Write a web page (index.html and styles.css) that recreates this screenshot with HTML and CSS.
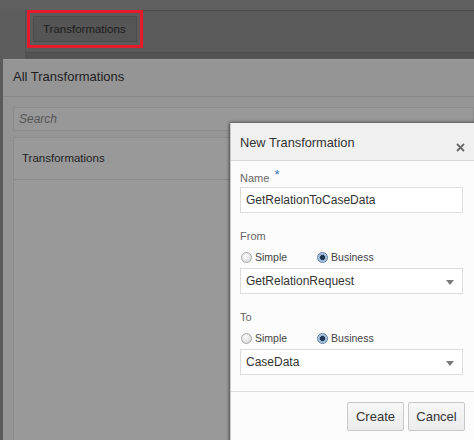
FILE: index.html
```html
<!DOCTYPE html>
<html>
<head>
<meta charset="utf-8">
<link rel="stylesheet" href="styles.css">
</head>
<body>
<div class="topbar">
  <div class="top-left"></div>
  <div class="tabs">
    <div class="tab">Transformations</div>
  </div>
</div>
<div class="panel">
  <div class="panel-head">All Transformations</div>
  <div class="panel-body">
    <div class="search">Search</div>
    <div class="list">
      <div class="list-row">Transformations</div>
    </div>
  </div>
</div>
<div class="dialog">
  <div class="dlg-head">
    <span class="dlg-title">New Transformation</span>
    <svg class="close" width="9" height="9" viewBox="0 0 9 9"><path d="M1 1L8 8M8 1L1 8" stroke="#6a6a6a" stroke-width="1.8"/></svg>
  </div>
  <div class="dlg-body">
    <div class="label">Name <span class="req">*</span></div>
    <div class="field">GetRelationToCaseData</div>
    <div class="label gap-lg">From</div>
    <div class="radios">
      <span class="radio"><span class="dot"></span>Simple</span>
      <span class="radio"><span class="dot on"></span>Business</span>
    </div>
    <div class="field select">GetRelationRequest<span class="arrow"></span></div>
    <div class="label gap-lg">To</div>
    <div class="radios">
      <span class="radio"><span class="dot"></span>Simple</span>
      <span class="radio"><span class="dot on"></span>Business</span>
    </div>
    <div class="field select">CaseData<span class="arrow"></span></div>
  </div>
  <div class="dlg-foot">
    <button class="btn">Create</button>
    <button class="btn">Cancel</button>
  </div>
</div>
</body>
</html>
```

FILE: styles.css
```css
html, body {
  margin: 0;
  padding: 0;
}
body {
  width: 474px;
  height: 440px;
  overflow: hidden;
  background: #5a5a5a;
  font-family: "Liberation Sans", Arial, sans-serif;
  position: relative;
}
.topbar {
  height: 59px;
  display: flex;
  background: #5b5b5b;
  border-top: 10px solid #5f5f5f;
  box-sizing: border-box;
  box-shadow: inset 0 1px 0 #4b4b4b, inset 0 -6px 0 #535353, inset 0 -7px 0 #4e4e4e;
}
.top-left {
  width: 25px;
  border-right: 1px solid #525252;
  background: #5d5d5d;
}
.tabs {
  padding: 6px 0 0 7px;
}
.tab {
  width: 104px;
  height: 26px;
  box-sizing: border-box;
  background: #555555;
  border: 1px solid #4c4c4c;
  color: #1c1c1c;
  font-size: 11.5px;
  line-height: 24px;
  padding-left: 9px;
  outline: 3px solid #e41b2a;
  outline-offset: 3px;
}
.panel {
  margin-left: 3px;
  height: 381px;
  background: #959595;
  border-top: 1px solid #9c9c9c;
  box-sizing: border-box;
}
.panel-head {
  height: 37px;
  line-height: 34px;
  padding-left: 10px;
  font-size: 13px;
  color: #1e1e1e;
  border-bottom: 1px solid #888888;
  box-sizing: border-box;
}
.panel-body {
  padding: 10px 0 0 10px;
}
.search {
  height: 24px;
  box-sizing: border-box;
  border: 1px solid #8c8c8c;
  background: #989898;
  font-size: 12px;
  font-style: italic;
  color: #555555;
  line-height: 22px;
  padding-left: 5px;
}
.list {
  margin-top: 6px;
  height: 320px;
  border: 1px solid #8c8c8c;
  background: #999999;
}
.list-row {
  height: 41px;
  line-height: 41px;
  padding-left: 8px;
  font-size: 11.5px;
  color: #1e1e1e;
  border-bottom: 1px solid #8a8a8a;
}
.dialog {
  position: absolute;
  left: 230px;
  top: 123px;
  width: 246px;
  height: 330px;
  background: #fcfcfc;
  border-left: 1px solid #c8c8c8;
  box-shadow: -1px 0 3px rgba(0,0,0,0.4), 0 -1px 3px rgba(0,0,0,0.25);
  box-sizing: border-box;
}
.dlg-head {
  height: 38px;
  background: #f0f0f0;
  border-bottom: 1px solid #d8d8d8;
  box-sizing: border-box;
  position: relative;
  padding: 10px 0 0 9px;
}
.dlg-title {
  font-size: 12.8px;
  color: #333333;
}
.close {
  position: absolute;
  left: 225px;
  top: 20px;
}
.dlg-body {
  padding: 10px 12px 16px 9px;
  border-bottom: 1px solid #dddddd;
}
.label {
  font-size: 11px;
  line-height: 14px;
  height: 14px;
  color: #666666;
}
.req {
  color: #3a74b0;
  font-size: 13px;
  position: relative;
  top: -3px;
  margin-left: 2px;
}
.gap-lg {
  margin-top: 16px;
}
.field {
  margin-top: 2px;
  height: 26px;
  width: 223px;
  box-sizing: border-box;
  border: 1px solid #dcdcdc;
  background: #ffffff;
  font-size: 12px;
  color: #333333;
  line-height: 24px;
  padding-left: 5px;
  position: relative;
}
.select {
  margin-top: 2px;
}
.arrow {
  position: absolute;
  right: 8px;
  top: 11px;
  width: 0;
  height: 0;
  border-left: 4px solid transparent;
  border-right: 4px solid transparent;
  border-top: 5px solid #7a7a7a;
}
.radios {
  margin-top: 5px;
  height: 18px;
  display: flex;
  align-items: center;
  gap: 29px;
  font-size: 10.5px;
  color: #444444;
}
.radio {
  display: flex;
  align-items: center;
  gap: 3px;
}
.dot {
  width: 11px;
  height: 11px;
  border-radius: 50%;
  box-sizing: border-box;
  border: 1px solid #a8a8a8;
  background: radial-gradient(circle at 40% 35%, #ffffff, #d0d0d0);
  margin-left: 1px;
}
.dot.on {
  border-color: #5d7fa3;
  background: radial-gradient(circle, #1f3550 0 2.2px, #8fb0d2 2.8px, #d6e3f0);
}
.dlg-foot {
  display: flex;
  justify-content: flex-end;
  gap: 4px;
  padding: 10px 11px 0 0;
}
.btn {
  height: 29px;
  width: 57px;
  border: 1px solid #c8c8c8;
  border-radius: 2px;
  background: linear-gradient(#f7f7f7, #ececec);
  font-family: "Liberation Sans", Arial, sans-serif;
  font-size: 13px;
  color: #333333;
  padding: 0;
}
```
